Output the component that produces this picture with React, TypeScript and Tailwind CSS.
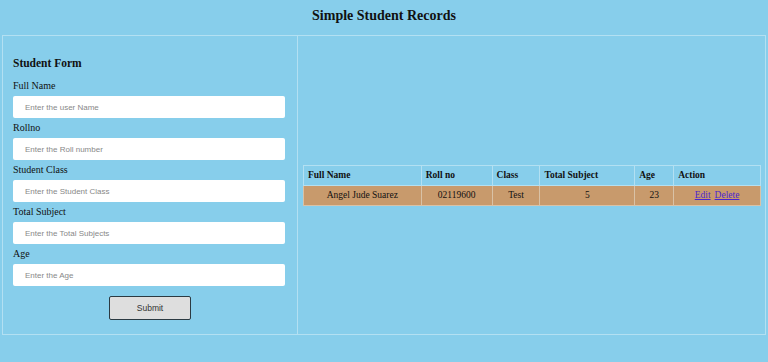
import React from "react";

const serif = { fontFamily: '"Liberation Serif", "Times New Roman", serif' };

const fields = [
  { label: "Full Name", ph: "Enter the user Name" },
  { label: "Rollno", ph: "Enter the Roll number" },
  { label: "Student Class", ph: "Enter the Student Class" },
  { label: "Total Subject", ph: "Enter the Total Subjects" },
  { label: "Age", ph: "Enter the Age" },
];

export default function App() {
  return (
    <div
      className="w-[768px] h-[362px] bg-[#87ceeb] text-[#111] overflow-hidden font-['Liberation_Serif',serif]"
      style={serif}
    >
      <div className="h-[35px] pt-[7px] text-center text-[14px] leading-[18px] font-bold">
        Simple Student Records
      </div>
      <div className="mx-[2px] h-[300px] border border-[#b3e0f2] flex">
        <div className="w-[294px] pt-[20px] pl-[10px] pr-[10px]">
          <div className="text-[11.5px] leading-[15px] font-bold">Student Form</div>
          <div className="mt-[6px] flex flex-col gap-[1px]">
            {fields.map((f) => (
              <div key={f.label}>
                <div className="text-[10px] leading-[15px] h-[15px] pt-[1px]">{f.label}</div>
                <input
                  placeholder={f.ph}
                  className="mt-[4px] block w-[272px] h-[22px] bg-white rounded-[2px] pl-[12px] text-[8px] placeholder:text-[#888] outline-none font-['Liberation_Sans',sans-serif]"
                />
              </div>
            ))}
          </div>
          <div className="mt-[10px] flex justify-center">
            <button className="w-[82px] h-[24px] bg-[#dedede] border-[1.5px] border-[#2b3a42] rounded-[2px] text-[8.5px] text-[#333] font-['Liberation_Sans',sans-serif]">
              Submit
            </button>
          </div>
        </div>
        <div className="flex-1 border-l border-[#b3e0f2] flex items-center pl-[5px] pr-[3px]">
          <table className="w-[458px] border-collapse text-[9.5px]">
            <thead>
              <tr className="h-[20px]">
                {[
                  ["Full Name", "w-[118px]"],
                  ["Roll no", "w-[71px]"],
                  ["Class", "w-[48px]"],
                  ["Total Subject", "w-[95px]"],
                  ["Age", "w-[39px]"],
                  ["Action", "w-[87px]"],
                ].map(([h, w]) => (
                  <th
                    key={h}
                    className={`${w} border border-[#b3e0f2] text-left font-bold px-[4px] leading-[12px]`}
                  >
                    {h}
                  </th>
                ))}
              </tr>
            </thead>
            <tbody>
              <tr className="h-[20px] bg-[#c89a6c]">
                <td className="border border-[#d9c2a6] text-center">Angel Jude Suarez</td>
                <td className="border border-[#d9c2a6] text-center">02119600</td>
                <td className="border border-[#d9c2a6] text-center">Test</td>
                <td className="border border-[#d9c2a6] text-center">5</td>
                <td className="border border-[#d9c2a6] text-center">23</td>
                <td className="border border-[#d9c2a6] text-center">
                  <a href="#" className="text-[#4a26cf] underline">Edit</a>
                  <span className="inline-block w-[4px]"></span>
                  <a href="#" className="text-[#4a26cf] underline">Delete</a>
                </td>
              </tr>
            </tbody>
          </table>
        </div>
      </div>
    </div>
  );
}
